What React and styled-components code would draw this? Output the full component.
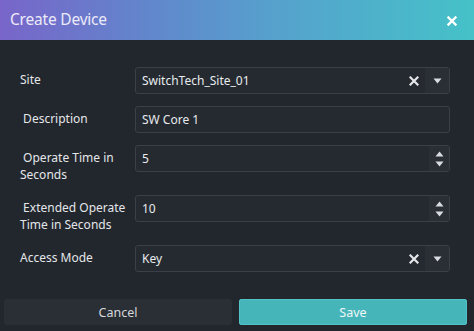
import React from "react";
import styled, { createGlobalStyle } from "styled-components";

const GlobalStyle = createGlobalStyle`
  html, body {
    margin: 0;
    padding: 0;
    background: #22262d;
  }
  body {
    font-family: "Noto Sans", "Open Sans", sans-serif;
  }
`;

const fields = [
  { label: "Site", kind: "select", value: "SwitchTech_Site_01" },
  { label: "\u00a0Description", kind: "text", value: "SW Core 1" },
  { label: "\u00a0Operate Time in Seconds", kind: "number", value: "5" },
  { label: "\u00a0Extended Operate Time in Seconds", kind: "number", value: "10" },
  { label: "Access Mode", kind: "select", value: "Key" },
];

function CloseIcon({ size, color, weight }) {
  return (
    <svg width={size} height={size} viewBox="0 0 10 10">
      <path
        d="M1.5 1.5 L8.5 8.5 M8.5 1.5 L1.5 8.5"
        stroke={color}
        strokeWidth={weight}
        strokeLinecap="square"
      />
    </svg>
  );
}

function Caret({ up }) {
  return (
    <svg width="9" height="6" viewBox="0 0 9 6">
      <path d={up ? "M0.5 5.5 L4.5 0.5 L8.5 5.5 Z" : "M0.5 0.5 L8.5 0.5 L4.5 5.5 Z"} fill="#d9dde2" />
    </svg>
  );
}

function Field({ kind, value }) {
  return (
    <InputBox>
      <Value>{value}</Value>
      {kind === "select" && (
        <>
          <Clear>
            <CloseIcon size={10} color="#e4e6e9" weight={2.2} />
          </Clear>
          <Arrow>
            <Caret />
          </Arrow>
        </>
      )}
      {kind === "number" && (
        <Spinner>
          <Caret up />
          <Caret />
        </Spinner>
      )}
    </InputBox>
  );
}

export default function App() {
  return (
    <>
      <GlobalStyle />
      <Dialog>
        <Header>
          <Title>Create Device</Title>
          <CloseButton>
            <CloseIcon size={10} color="#ffffff" weight={2.4} />
          </CloseButton>
        </Header>
        <Body>
          <Form>
            {fields.map((f) => (
              <React.Fragment key={f.label}>
                <Label>{f.label}</Label>
                <Field kind={f.kind} value={f.value} />
              </React.Fragment>
            ))}
          </Form>
          <Footer>
            <Button>Cancel</Button>
            <Button primary>Save</Button>
          </Footer>
        </Body>
      </Dialog>
    </>
  );
}

const Dialog = styled.div`
  width: 474px;
  height: 331px;
  background: #22262d;
  display: flex;
  flex-direction: column;
  overflow: hidden;
`;

const Header = styled.div`
  height: 40px;
  flex: none;
  display: flex;
  align-items: center;
  justify-content: space-between;
  padding: 0 17px 0 10px;
  background: linear-gradient(90deg, #7865c9 0%, #6285cc 30%, #55a3cd 60%, #45c2c8 100%);
  box-sizing: border-box;
`;

const Title = styled.div`
  color: #eceaf9;
  font-size: 15.5px;
  letter-spacing: -0.2px;
  padding-bottom: 2px;
`;

const CloseButton = styled.div`
  display: flex;
  align-items: center;
  margin-top: 1px;
`;

const Body = styled.div`
  flex: 1;
  display: flex;
  flex-direction: column;
  padding-top: 27px;
`;

const Form = styled.div`
  display: grid;
  grid-template-columns: 115px 315px;
  row-gap: 12px;
  align-items: start;
  padding-left: 20px;
`;

const Label = styled.div`
  color: #e4e6ea;
  font-size: 12px;
  line-height: 17px;
  padding-top: 4px;
  padding-right: 4px;
`;

const InputBox = styled.div`
  height: 27px;
  box-sizing: border-box;
  border: 1px solid #3a4049;
  border-radius: 3px;
  background: #252a31;
  display: flex;
  align-items: stretch;
  overflow: hidden;
`;

const Value = styled.div`
  flex: 1;
  display: flex;
  align-items: center;
  padding-left: 6px;
  color: #e8eaed;
  font-size: 12px;
`;

const Clear = styled.div`
  width: 22px;
  display: flex;
  align-items: center;
  justify-content: center;
`;

const Arrow = styled.div`
  width: 24px;
  display: flex;
  align-items: center;
  justify-content: center;
  background: #2a2f36;
`;

const Spinner = styled.div`
  width: 20px;
  display: flex;
  flex-direction: column;
  align-items: center;
  justify-content: center;
  gap: 4px;
  background: #2a2f36;
`;

const Footer = styled.div`
  display: flex;
  gap: 7px;
  padding: 0 7px 0 4px;
  margin-top: 27px;
`;

const Button = styled.div`
  flex: 1;
  height: 26px;
  display: flex;
  align-items: center;
  justify-content: center;
  border-radius: 3px;
  font-size: 12.5px;
  color: ${(p) => (p.primary ? "#eef8f8" : "#d6d8dc")};
  background: ${(p) => (p.primary ? "#46b5ba" : "#2a2e35")};
  box-shadow: ${(p) => (p.primary ? "inset 0 0 0 1px #52c2c6" : "none")};
`;
